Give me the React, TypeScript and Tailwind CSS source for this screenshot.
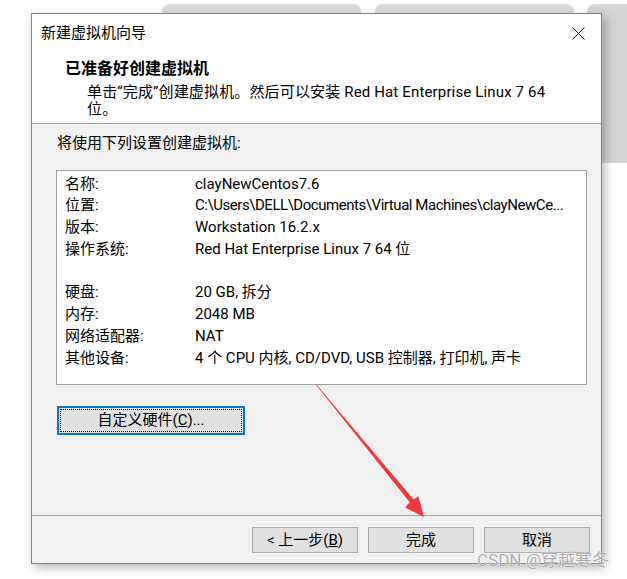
import React from "react";

const rows: [string, string][] = [
  ["名称:", "clayNewCentos7.6"],
  ["位置:", "C:\\Users\\DELL\\Documents\\Virtual Machines\\clayNewCe..."],
  ["版本:", "Workstation 16.2.x"],
  ["操作系统:", "Red Hat Enterprise Linux 7 64 位"],
  ["", ""],
  ["硬盘:", "20 GB, 拆分"],
  ["内存:", "2048 MB"],
  ["网络适配器:", "NAT"],
  ["其他设备:", "4 个 CPU 内核, CD/DVD, USB 控制器, 打印机, 声卡"],
];

function WinButton({ children }: { children: React.ReactNode }) {
  return (
    <button className="w-[106px] h-[26px] bg-[#e1e1e1] border border-[#adadad] text-[15px] text-black flex items-center justify-center">
      {children}
    </button>
  );
}

export default function App() {
  return (
    <div className="relative w-[627px] h-[579px] overflow-hidden bg-white font-['Roboto','Noto_Sans_CJK_SC',sans-serif] text-black">
      {/* windows behind the dialog */}
      <div className="absolute left-[162px] top-[4px] w-[199px] h-[40px] rounded-[8px] bg-[#dadada]" />
      <div className="absolute left-[375px] top-[4px] w-[199px] h-[40px] rounded-[8px] bg-[#dadada]" />
      <div className="absolute left-[587px] top-[4px] w-[60px] h-[159px] rounded-[8px] bg-[#d4d4d4]" />

      {/* dialog */}
      <div className="absolute left-[31px] top-[13px] w-[571px] h-[551px] flex flex-col border border-[#858585] bg-[#f0f0f0] shadow-[3px_4px_10px_rgba(0,0,0,0.28)]">
        {/* title bar */}
        <div className="h-[38px] flex items-center bg-white">
          <span className="pl-[9px] text-[15px] flex-1">新建虚拟机向导</span>
          <div className="w-[46px] h-full flex items-center justify-center">
            <svg width="13" height="13" viewBox="0 0 13 13">
              <path d="M0.5 0.5 L12.5 12.5 M12.5 0.5 L0.5 12.5" stroke="#111" strokeWidth="1" />
            </svg>
          </div>
        </div>

        {/* header */}
        <div className="h-[72px] bg-white border-b border-[#a0a0a0] pt-[7px]">
          <div className="pl-[33px] text-[16px] font-bold leading-[20px]">已准备好创建虚拟机</div>
          <div className="pl-[55px] mt-[5px] text-[15px] leading-[17px] tracking-[0.15px]">
            单击“完成”创建虚拟机。然后可以安装 Red Hat Enterprise Linux 7 64
            <br />
            位。
          </div>
        </div>

        {/* body */}
        <div className="h-[391px] pl-[24px] pr-[14px] pt-[9px]">
          <div className="pl-[1px] text-[15px] leading-[20px]">将使用下列设置创建虚拟机:</div>
          <div className="mt-[17px] h-[215px] bg-white border border-[#a0a0a0] pt-[2px] pl-[8px] text-[15px]">
            {rows.map(([label, value], i) => (
              <div key={i} className="flex h-[21.75px] items-center whitespace-nowrap">
                <span className="w-[130px] shrink-0">{label}</span>
                <span className={i === 1 ? "tracking-[-0.45px]" : ""}>{value}</span>
              </div>
            ))}
          </div>
          <div className="mt-[21px] ml-[1px] w-[188px] h-[29px] border-2 border-[#0078d7] bg-[#e1e1e1] p-[1px]">
            <div className="w-full h-full border border-dotted border-black flex items-center justify-center text-[15px]">
              自定义硬件(<span className="underline">C</span>)...
            </div>
          </div>
        </div>

        {/* footer */}
        <div className="flex-1 border-t border-[#a0a0a0] pt-[11px] pr-[11px] flex justify-end items-start gap-[10px]">
          <WinButton>
            &lt; 上一步(<span className="underline">B</span>)
          </WinButton>
          <WinButton>完成</WinButton>
          <WinButton>取消</WinButton>
        </div>
      </div>

      {/* red annotation arrow */}
      <svg className="absolute left-0 top-0" width="627" height="579" viewBox="0 0 627 579">
        <polygon
          points="315.6,384.6 316.4,384.4 413.4,499.3 418.5,496.5 424,517 405,507.5 409.7,502.2"
          fill="#f03a3a"
        />
      </svg>

      {/* watermark */}
      <div className="absolute left-[477px] top-[549px] text-[17px] leading-[22px] text-[#acacac] [text-shadow:0_0_1px_#fff,0_0_1px_#fff] whitespace-nowrap">
        CSDN @穿越寒冬
      </div>
    </div>
  );
}
